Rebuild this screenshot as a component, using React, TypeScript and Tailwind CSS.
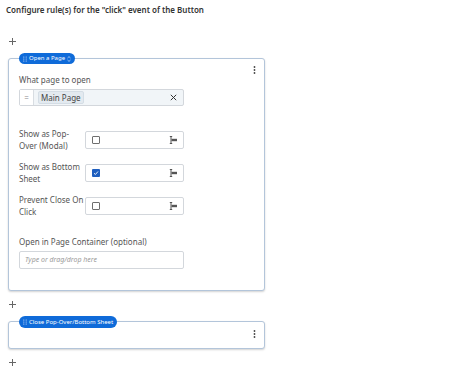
import React from "react";

function Plus() {
  return (
    <svg width="7" height="7" viewBox="0 0 7 7" className="block">
      <path d="M3.5 0V7M0 3.5H7" stroke="#666" strokeWidth="1" />
    </svg>
  );
}

function Dots() {
  return (
    <svg width="3" height="8" viewBox="0 0 3 8" className="block">
      <circle cx="1.5" cy="1" r="0.9" fill="#444" />
      <circle cx="1.5" cy="4" r="0.9" fill="#444" />
      <circle cx="1.5" cy="7" r="0.9" fill="#444" />
    </svg>
  );
}

function Grip() {
  return (
    <svg width="4" height="6" viewBox="0 0 4 6" className="block">
      <circle cx="0.8" cy="1" r="0.6" fill="#cfe0fb" />
      <circle cx="3.2" cy="1" r="0.6" fill="#cfe0fb" />
      <circle cx="0.8" cy="3" r="0.6" fill="#cfe0fb" />
      <circle cx="3.2" cy="3" r="0.6" fill="#cfe0fb" />
      <circle cx="0.8" cy="5" r="0.6" fill="#cfe0fb" />
      <circle cx="3.2" cy="5" r="0.6" fill="#cfe0fb" />
    </svg>
  );
}

function Sort() {
  return (
    <svg width="4" height="6" viewBox="0 0 4 6" className="block">
      <path d="M0.5 2L2 0.6L3.5 2M0.5 4L2 5.4L3.5 4" stroke="#dbe8fc" strokeWidth="0.7" fill="none" />
    </svg>
  );
}

function Bind() {
  return (
    <svg width="10" height="10" viewBox="0 0 10 10" className="block">
      <path d="M1.8 1.5H4.2M3 1.5V8.5M1.8 8.5H4.2" stroke="#555" strokeWidth="1" fill="none" />
      <rect x="3.5" y="3.8" width="5.5" height="2.4" fill="#555" />
    </svg>
  );
}

function Checkbox({ checked }: { checked?: boolean }) {
  if (checked) {
    return (
      <div className="w-[8px] h-[8px] rounded-[1px] bg-[#1f5fbf] flex items-center justify-center">
        <svg width="6" height="6" viewBox="0 0 6 6">
          <path d="M1 3.2L2.4 4.5L5 1.5" stroke="#fff" strokeWidth="0.9" fill="none" />
        </svg>
      </div>
    );
  }
  return <div className="w-[8px] h-[8px] rounded-[1px] border border-[#6f6f6f] bg-white" />;
}

function Row({ label, checked }: { label: React.ReactNode; checked?: boolean }) {
  return (
    <div className="flex items-center h-[24px]">
      <div className="w-[66px] whitespace-nowrap text-[8px] leading-[12px] text-[#555]">{label}</div>
      <div className="w-[99px] h-[18px] border border-[#d3d7dc] rounded-[2px] bg-white flex items-center justify-between pl-[6px] pr-[5px]">
        <Checkbox checked={checked} />
        <Bind />
      </div>
    </div>
  );
}

export default function App() {
  return (
    <div className="w-[474px] h-[379px] bg-white font-['Noto_Sans','Open_Sans',sans-serif] pl-[6px] pt-[4px]">
      <div className="text-[8px] leading-[12px] font-semibold text-[#333]">
        Configure rule(s) for the "click" event of the Button
      </div>
      <div className="ml-[3px] mt-[22px]">
        <Plus />
      </div>

      <div className="relative ml-[2px] mt-[13px] w-[257px] border border-[#b3c5da] rounded-[3px] shadow-[0_1px_2px_rgba(0,0,0,0.18)] bg-white">
        <div className="absolute -top-[6px] left-[10px] h-[11px] rounded-full bg-[#0f6bd9] flex items-center gap-[2px] px-[4px]">
          <Grip />
          <span className="text-[6px] leading-[11px] text-white">Open a Page</span>
          <Sort />
        </div>
        <div className="absolute right-[8px] top-[7px]">
          <Dots />
        </div>
        <div className="pl-[10px] pt-[15px] pb-[21px]">
          <div className="text-[8px] leading-[12px] text-[#555]">What page to open</div>
          <div className="mt-[3px] w-[165px] h-[17px] border border-[#d3d7dc] rounded-[2px] bg-[#f1f5f8] flex items-center">
            <div className="w-[14px] h-full flex items-center justify-center border-r border-[#d8dde2] bg-white text-[8px] text-[#888]">
              =
            </div>
            <div className="ml-[4px] h-[13px] px-[2px] rounded-[2px] bg-[#e3eaf0] border border-[#d4dde5] text-[8px] leading-[11px] text-[#444]">
              Main Page
            </div>
            <div className="ml-auto mr-[6px]">
              <svg width="7" height="7" viewBox="0 0 7 7" className="block">
                <path d="M0.8 0.8L6.2 6.2M6.2 0.8L0.8 6.2" stroke="#333" strokeWidth="1" />
              </svg>
            </div>
          </div>

          <div className="mt-[22px] flex flex-col gap-[9px]">
            <Row label={<>Show as Pop-<br />Over (Modal)</>} />
            <Row label={<>Show as Bottom<br />Sheet</>} checked />
            <Row label={<>Prevent Close On<br />Click</>} />
          </div>

          <div className="mt-[18px] text-[8px] leading-[12px] text-[#555]">Open in Page Container (optional)</div>
          <div className="mt-[3px] w-[165px] h-[18px] border border-[#d3d7dc] rounded-[2px] bg-white flex items-center pl-[5px]">
            <span className="text-[7px] italic text-[#9a9a9a]">Type or drag/drop here</span>
          </div>
        </div>
      </div>

      <div className="ml-[3px] mt-[10px]">
        <Plus />
      </div>

      <div className="relative ml-[2px] mt-[13px] w-[257px] h-[28px] border border-[#b3c5da] rounded-[3px] shadow-[0_1px_2px_rgba(0,0,0,0.18)] bg-white">
        <div className="absolute -top-[6px] left-[10px] h-[12px] rounded-full bg-[#0f6bd9] flex items-center gap-[2px] px-[4px]">
          <Grip />
          <span className="text-[6px] leading-[12px] text-white">Close Pop-Over/Bottom Sheet</span>
        </div>
        <div className="absolute right-[8px] top-[8px]">
          <Dots />
        </div>
      </div>

      <div className="ml-[3px] mt-[10px]">
        <Plus />
      </div>
    </div>
  );
}
